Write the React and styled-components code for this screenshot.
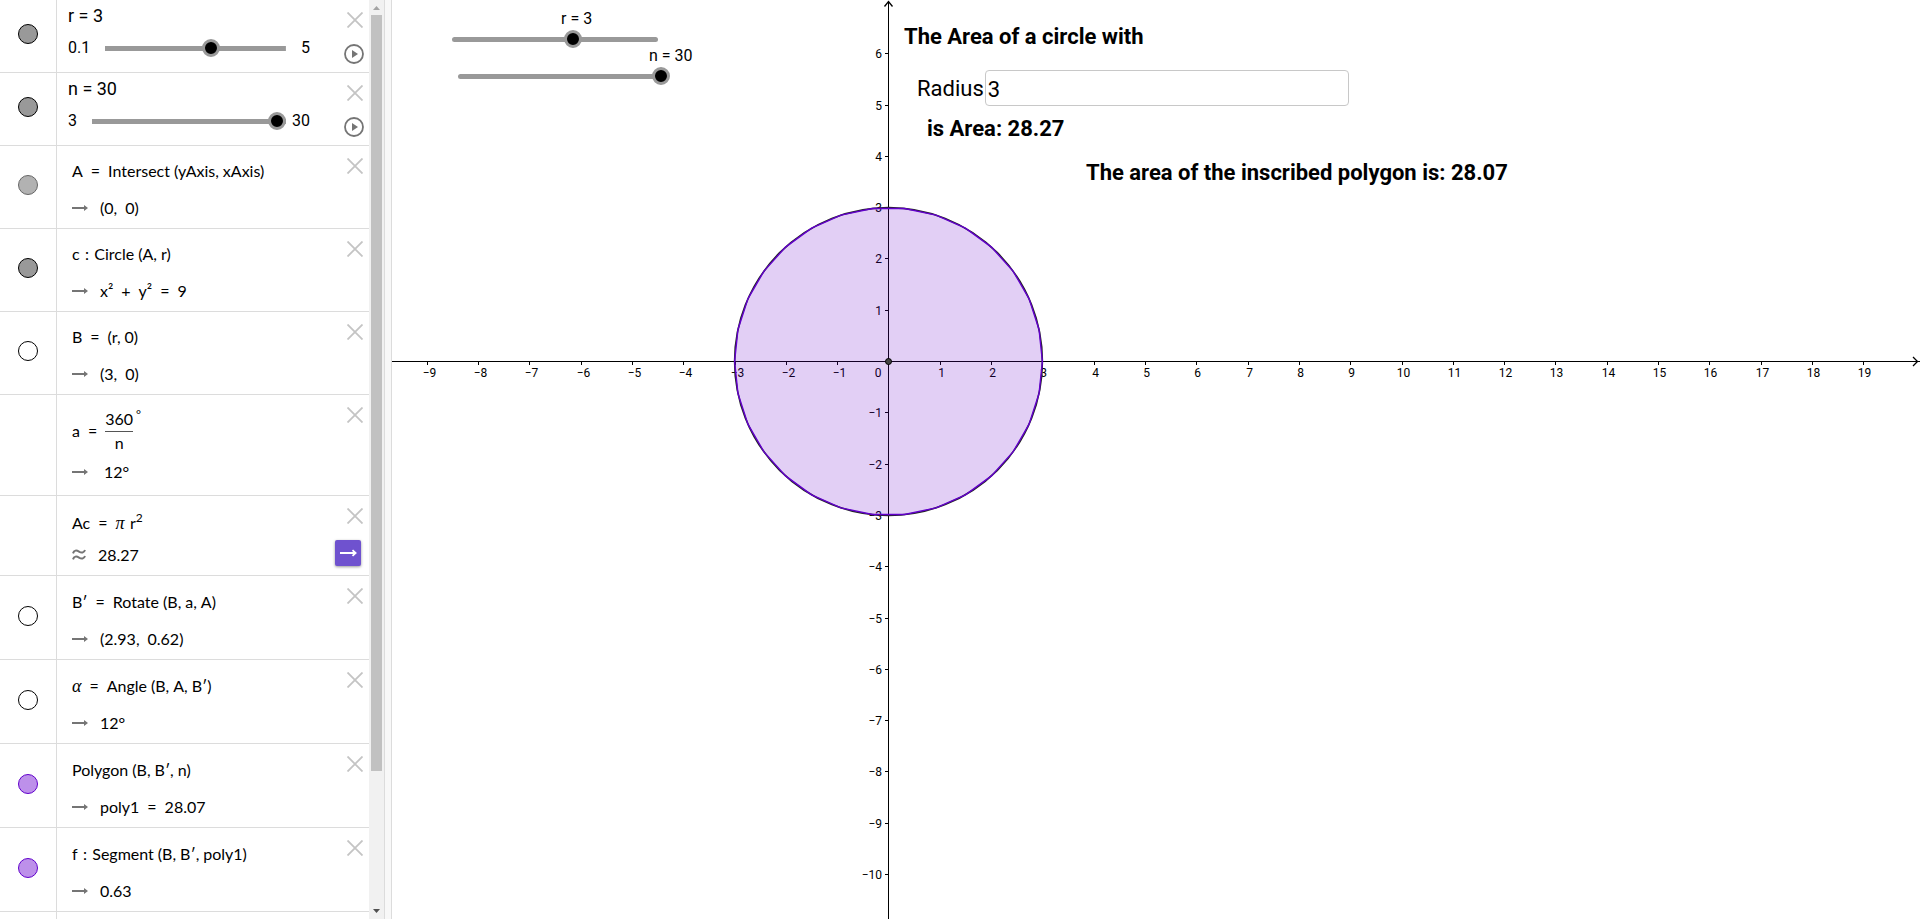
import React, { useState } from "react";
import styled, { createGlobalStyle, css } from "styled-components";

const GlobalStyle = createGlobalStyle`
  *, *::before, *::after { box-sizing: border-box; }
  body {
    margin: 0;
    background: #fff;
    color: #000;
    font-family: Roboto, "Liberation Sans", sans-serif;
  }
  button { padding: 0; border: 0; background: none; font: inherit; cursor: pointer; }
`;

const Page = styled.div`
  display: flex;
  height: 100vh;
  padding-bottom: 2px;
  overflow: hidden;
`;

/* ---------- algebra view ---------- */

const Algebra = styled.aside`
  display: flex;
  flex: none;
  width: 384px;
  overflow: hidden;
`;

const RowList = styled.div`
  flex: 1;
  min-width: 0;
`;

const Row = styled.section`
  display: flex;
  border-bottom: 1px solid #dcdcdc;
`;

const MarbleCell = styled.div`
  display: flex;
  flex: none;
  align-items: center;
  justify-content: center;
  width: 57px;
  padding-bottom: 4px;
  border-right: 1px solid #dcdcdc;
`;

const Marble = styled.button`
  width: 20px;
  height: 20px;
  border: 1px solid ${(p) => p.$line};
  border-radius: 50%;
  background: ${(p) => p.$fill};
`;

const Body = styled.div`
  display: flex;
  flex: 1;
  flex-direction: column;
  gap: ${(p) => p.$gap}px;
  min-width: 0;
  padding: ${(p) => p.$top}px 0 ${(p) => p.$bottom}px 15px;
  font-family: Lato, "Noto Sans", sans-serif;
  font-size: 16px;
  line-height: 24px;
  white-space: nowrap;
`;

const Definition = styled.div`
  display: flex;
  align-items: center;
  white-space: pre;
`;

const Output = styled.div`
  display: flex;
  align-items: center;
  gap: ${(p) => p.$gap || 12}px;
  white-space: pre;
`;

const Greek = styled.i`
  font-family: "Liberation Serif", serif;
  font-size: 18px;
  line-height: 20px;
`;

const Sup = styled.sup`
  align-self: flex-start;
  font-size: 12px;
  line-height: 14px;
`;

const Fraction = styled.span`
  display: flex;
  flex-direction: column;
  line-height: 22px;
  text-align: center;
`;

const Numerator = styled.span`
  padding-bottom: 1px;
  border-bottom: 1px solid #555;
`;

const Actions = styled.div`
  display: flex;
  flex: none;
  flex-direction: column;
  align-items: flex-end;
  gap: 15px;
  width: 44px;
  padding: 11px 5px 0 0;
`;

const IconButton = styled.button`
  display: flex;
  align-items: center;
  justify-content: center;
  height: ${(p) => p.$size}px;
  width: ${(p) => p.$size}px;
`;

const OutputToggle = styled.button`
  display: flex;
  align-items: center;
  justify-content: center;
  width: 26px;
  height: 26px;
  margin-right: 3px;
  border-radius: 2px;
  background: #6f52cf;
  box-shadow: 0 1px 3px rgba(0, 0, 0, 0.4);
`;

const SliderBody = styled.div`
  display: flex;
  flex: 1;
  flex-direction: column;
  height: 72px;
  padding: 4px 0 0 11px;
  min-width: 0;
`;

const SliderTitle = styled.label`
  font-size: 18px;
  line-height: 24px;
`;

const SliderLine = styled.div`
  display: flex;
  align-items: center;
  margin-top: 8px;
  padding-right: 15px;
  font-size: 16px;
  line-height: 24px;
`;

const SliderMin = styled.span`
  margin-right: 15px;
`;

const SliderMax = styled.span`
  width: 24px;
  text-align: right;
`;

const knob = css`
  appearance: none;
  width: 18px;
  height: 18px;
  border: 3px solid #999;
  border-radius: 50%;
  background: #000;
`;

const Range = styled.input`
  appearance: none;
  flex: 1;
  min-width: 0;
  width: 100%;
  height: 18px;
  margin: 0;
  background: ${(p) =>
    p.$bare ? "none" : "linear-gradient(#999, #999) center / 100% 5px no-repeat"};
  &::-webkit-slider-thumb { ${knob} }
  &::-moz-range-thumb { ${knob} }
`;

const ScrollBar = styled.div`
  display: flex;
  flex: none;
  flex-direction: column;
  align-items: center;
  width: 15px;
  background: #f1f1f1;
  svg { display: block; flex: none; }
`;

const ScrollTrack = styled.div`
  flex: 1;
  width: 11px;
`;

const ScrollThumb = styled.div`
  height: 85%;
  background: #c1c1c1;
`;

const Divider = styled.div`
  flex: none;
  width: 8px;
  border: solid #dcdcdc;
  border-width: 0 1px;
  background: #f8f8f8;
`;

/* ---------- graphics view ---------- */

const Graphics = styled.main`
  position: relative;
  flex: 1;
  min-width: 0;
  overflow: hidden;
`;

const Plane = styled.svg`
  display: block;
  width: 100%;
  height: 100%;
  text { font-family: Roboto, "Liberation Sans", sans-serif; font-size: 12px; }
`;

const Placed = styled.div`
  position: absolute;
  left: ${(p) => p.$x}px;
  top: ${(p) => p.$y}px;
`;

const Caption = styled(Placed)`
  font-size: 22px;
  font-weight: 700;
  line-height: 28px;
  white-space: nowrap;
`;

const GraphSlider = styled(Placed)`
  width: 218px;
  display: flex;
  &::before {
    content: "";
    position: absolute;
    inset: 7px 6px 6px;
    border-radius: 3px;
    background: #999;
  }
  input { position: relative; }
`;

const GraphSliderName = styled(Placed)`
  font-size: 16px;
  line-height: 20px;
  white-space: nowrap;
`;

const RadiusField = styled(Placed)`
  display: flex;
  align-items: center;
  gap: 1px;
  font-size: 22px;
  line-height: 28px;
  label { padding-top: 2px; }
`;

const RadiusInput = styled.input`
  width: 364px;
  height: 36px;
  padding: 2px 2px 0;
  border: 1px solid #c8c8c8;
  border-radius: 4px;
  background: #fff;
  color: #000;
  font: inherit;
`;

const CloseIcon = () => (
  <svg width="16" height="16" viewBox="0 0 16 16" stroke="#c4c4c4" strokeWidth="1.8">
    <path d="M0.5 0.5 15.5 15.5M15.5 0.5 0.5 15.5" />
  </svg>
);

const PlayIcon = () => (
  <svg width="20" height="20" viewBox="0 0 20 20">
    <circle cx="10" cy="10" r="9" fill="none" stroke="#757575" strokeWidth="1.8" />
    <path d="M8 6 14 10 8 14Z" fill="#757575" />
  </svg>
);

const ArrowIcon = ({ color = "#757575" }) => (
  <svg width="16" height="8" viewBox="0 0 16 8" fill={color}>
    <path d="M0 3H12V1L16 4 12 7V5H0Z" />
  </svg>
);

const ToggleIcon = () => (
  <svg width="17" height="8" viewBox="0 0 17 8" fill="none" stroke="#fff" strokeWidth="1.8">
    <path d="M0 4H15.5M12.5 1.2 15.6 4 12.5 6.8" />
  </svg>
);

const ApproxIcon = () => (
  <svg width="14" height="12" viewBox="0 0 14 12" fill="none" stroke="#757575" strokeWidth="2">
    <path d="M1 4.4C2 1 4.500 1 7 2.600S12 4 13 1M1 10.4C2 7 4.500 7 7 8.600S12 10 13 7" />
  </svg>
);

const MARBLES = {
  dark: ["#999", "#000"],
  light: ["#b2b2b2", "#666"],
  off: ["#fff", "#000"],
  purple: ["#bd90ea", "#6100cc"],
};

/* Typographic spaces of a formula: around relations, around a colon, after a comma. */
const REL = "\u2002";
const MID = "\u2004";
const SML = "\u2005";
const math = (s) =>
  s
    .replace(/ ([=+]) ?/g, `${REL}$1${REL}`)
    .replace(/ : /g, `${MID}:${MID}`)
    .replace(/,/g, `,${SML}`)
    .replace(/([a-z])\(/g, `$1${SML}(`);

function ExpressionRow({ name, marble, top = 14, gap = 13, bottom = 8, actions, children }) {
  const [fill, line] = MARBLES[marble] || [];
  return (
    <Row>
      <MarbleCell>
        {marble && <Marble $fill={fill} $line={line} aria-label={`Show or hide ${name}`} />}
      </MarbleCell>
      <Body $top={top} $gap={gap} $bottom={bottom}>{children}</Body>
      <Actions>
        <IconButton $size={18} aria-label={`Delete ${name}`}><CloseIcon /></IconButton>
        {actions}
      </Actions>
    </Row>
  );
}

function SliderRow({ name, min, max, step, value, onChange }) {
  return (
    <Row>
      <MarbleCell>
        <Marble $fill="#999" $line="#000" aria-label={`Show or hide ${name}`} />
      </MarbleCell>
      <SliderBody>
        <SliderTitle htmlFor={`alg-${name}`}>{`${name} = ${value}`}</SliderTitle>
        <SliderLine>
          <SliderMin>{min}</SliderMin>
          <Range id={`alg-${name}`} type="range" min={min} max={max} step={step} value={value}
            onChange={(e) => onChange(Number(e.target.value))} />
          <SliderMax>{max}</SliderMax>
        </SliderLine>
      </SliderBody>
      <Actions>
        <IconButton $size={18} aria-label={`Delete ${name}`}><CloseIcon /></IconButton>
        <IconButton $size={20} aria-label={`Animate ${name}`}><PlayIcon /></IconButton>
      </Actions>
    </Row>
  );
}

const OX = 496.5;
const OY = 361.5;
const UNIT = 51.3;
const xTick = (v) => Math.round(OX + v * UNIT) + 0.5;
const yTick = (v) => Math.floor(OY - v * UNIT) + 0.5;
const numeral = (v) => String(v).replace("-", "−");
const X_TICKS = Array.from({ length: 29 }, (_, i) => i - 9).filter(Boolean);
const Y_TICKS = Array.from({ length: 17 }, (_, i) => i - 10).filter(Boolean);

function CoordinatePlane({ r, n }) {
  const points = Array.from({ length: n }, (_, i) => {
    const t = (2 * Math.PI * i) / n;
    return `${OX + r * UNIT * Math.cos(t)},${OY - r * UNIT * Math.sin(t)}`;
  }).join(" ");
  return (
    <Plane role="img" aria-label="Circle with inscribed polygon">
      <g stroke="#000" fill="none">
        <line x1="0" y1={OY} x2="100%" y2={OY} />
        <line x1={OX} y1="2" x2={OX} y2="100%" />
        <path d={`M${OX - 4} 6.500 L${OX} 1.500 L${OX + 4} 6.500`} strokeWidth="1.3" />
        <svg x="100%" y={OY} overflow="visible">
          <path d="M-7 -4.500 L-2.500 0 L-7 4.500" strokeWidth="1.3" />
        </svg>
        {X_TICKS.map((v) => (
          <line key={v} x1={xTick(v)} x2={xTick(v)} y1={OY} y2={OY + 3.5} />
        ))}
        {Y_TICKS.map((v) => (
          <line key={v} x1={OX - 3.5} x2={OX} y1={yTick(v)} y2={yTick(v)} />
        ))}
      </g>
      {X_TICKS.map((v) => (
        <text key={v} x={xTick(v) + (v < 0 ? 2 : 1)} y="377" textAnchor="middle">{numeral(v)}</text>
      ))}
      <text x="486" y="377" textAnchor="middle">0</text>
      {Y_TICKS.map((v) => (
        <text key={v} x="490" y={yTick(v) + 4.5} textAnchor="end">{numeral(v)}</text>
      ))}
      <circle cx={OX} cy={OY} r={r * UNIT} fill="none" stroke="#222" strokeWidth="1.6" />
      <polygon points={points} fill="#6600cc" fillOpacity="0.19" stroke="#6200cc" strokeWidth="1.4" />
      <circle cx={OX} cy={OY} r="3" fill="#444" stroke="#000" />
    </Plane>
  );
}

export default function App() {
  const [r, setR] = useState(3);
  const [n, setN] = useState(30);
  const step = (2 * Math.PI) / n;
  const degrees = Math.round((36000 / n)) / 100;
  const area = (Math.PI * r * r).toFixed(2);
  const polygonArea = ((n * r * r * Math.sin(step)) / 2).toFixed(2);
  const side = (2 * r * Math.sin(step / 2)).toFixed(2);
  const rotated = `(${(r * Math.cos(step)).toFixed(2)},${REL}${(r * Math.sin(step)).toFixed(2)})`;

  return (
    <>
      <GlobalStyle />
      <Page>
        <Algebra>
          <RowList>
            <SliderRow name="r" min={0.1} max={5} step={0.1} value={r} onChange={setR} />
            <SliderRow name="n" min={3} max={30} step={1} value={n} onChange={setN} />
            <ExpressionRow name="A" marble="light" top={13}>
              <Definition>{math("A = Intersect(yAxis,xAxis)")}</Definition>
              <Output><ArrowIcon />{`(0,${REL}0)`}</Output>
            </ExpressionRow>
            <ExpressionRow name="c" marble="dark" top={13}>
              <Definition>{math("c : Circle(A,r)")}</Definition>
              <Output><ArrowIcon />{math(`x² + y² = ${Math.round(r * r * 100) / 100}`)}</Output>
            </ExpressionRow>
            <ExpressionRow name="B" marble="off" top={13}>
              <Definition>{math("B = (r,0)")}</Definition>
              <Output><ArrowIcon />{`(${r},${REL}0)`}</Output>
            </ExpressionRow>
            <ExpressionRow name="a" top={13} gap={6} bottom={11}>
              <Definition>
                {math("a = ")}
                <Fraction><Numerator>360</Numerator><span>n</span></Fraction>
                <Sup>{`${SML}°`}</Sup>
              </Definition>
              <Output $gap={16}><ArrowIcon />{`${degrees}°`}</Output>
            </ExpressionRow>
            <ExpressionRow name="Ac" top={15} gap={8}
              actions={<OutputToggle aria-label="Toggle exact output"><ToggleIcon /></OutputToggle>}>
              <Definition>{math("Ac = ")}<Greek>π</Greek>{`${MID}r`}<Sup>2</Sup></Definition>
              <Output><ApproxIcon />{area}</Output>
            </ExpressionRow>
            <ExpressionRow name="B′" marble="off">
              <Definition>{math("B′ = Rotate(B,a,A)")}</Definition>
              <Output><ArrowIcon />{rotated}</Output>
            </ExpressionRow>
            <ExpressionRow name="α" marble="off">
              <Definition><Greek>α</Greek>{math(" = Angle(B,A,B′)")}</Definition>
              <Output><ArrowIcon />{`${degrees}°`}</Output>
            </ExpressionRow>
            <ExpressionRow name="poly1" marble="purple">
              <Definition>{math("Polygon(B,B′,n)")}</Definition>
              <Output><ArrowIcon />{math(`poly1 = ${polygonArea}`)}</Output>
            </ExpressionRow>
            <ExpressionRow name="f" marble="purple">
              <Definition>{math("f : Segment(B,B′,poly1)")}</Definition>
              <Output><ArrowIcon />{side}</Output>
            </ExpressionRow>
            <Row><MarbleCell /><Body $top={8} $gap={0} $bottom={8} /></Row>
          </RowList>
          <ScrollBar aria-hidden="true">
            <svg width="15" height="15" viewBox="0 0 15 15"><path d="M4 10 7.5 6 11 10Z" fill="#a3a3a3" /></svg>
            <ScrollTrack><ScrollThumb /></ScrollTrack>
            <svg width="15" height="15" viewBox="0 0 15 15"><path d="M4 5 7.5 9 11 5Z" fill="#505050" /></svg>
          </ScrollBar>
        </Algebra>
        <Divider />
        <Graphics>
          <CoordinatePlane r={r} n={n} />
          <GraphSliderName $x={169} $y={9}><label htmlFor="graph-r">{`r = ${r}`}</label></GraphSliderName>
          <GraphSlider $x={54} $y={30}>
            <Range $bare id="graph-r" type="range" min={0.1} max={5} step={0.1} value={r}
              onChange={(e) => setR(Number(e.target.value))} />
          </GraphSlider>
          <GraphSliderName $x={257} $y={46}><label htmlFor="graph-n">{`n = ${n}`}</label></GraphSliderName>
          <GraphSlider $x={60} $y={67}>
            <Range $bare id="graph-n" type="range" min={3} max={30} step={1} value={n}
              onChange={(e) => setN(Number(e.target.value))} />
          </GraphSlider>
          <Caption $x={512} $y={23}>The Area of a circle with</Caption>
          <RadiusField $x={525} $y={70}>
            <label htmlFor="radius">Radius</label>
            <RadiusInput id="radius" value={r}
              onChange={(e) => { const v = Number(e.target.value); if (v >= 0 && v <= 5) setR(v); }} />
          </RadiusField>
          <Caption $x={535} $y={115}>is Area: {area}</Caption>
          <Caption $x={694} $y={159}>The area of the inscribed polygon is: {polygonArea}</Caption>
        </Graphics>
      </Page>
    </>
  );
}
